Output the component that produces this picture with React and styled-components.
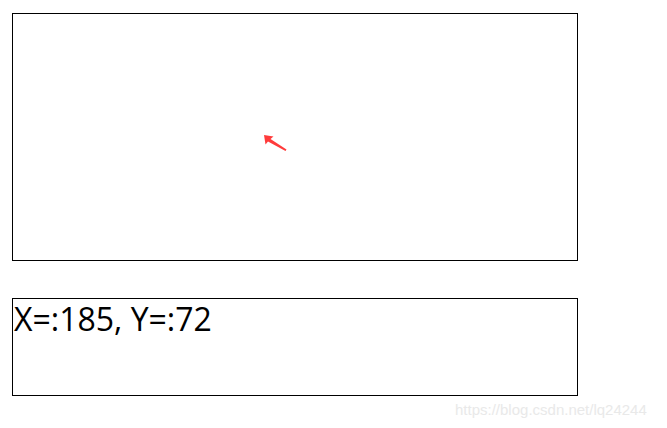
import React from 'react';
import styled, { createGlobalStyle } from 'styled-components';

const GlobalStyle = createGlobalStyle`
    html, body {
        margin: 0;
        padding: 0;
        background: #ffffff;
    }
`;

const Page = styled.div`
    position: relative;
    width: 667px;
    height: 428px;
    padding: 13px 0 0 12px;
    box-sizing: border-box;
    display: flex;
    flex-direction: column;
    gap: 37px;
    font-family: 'Open Sans', 'Noto Sans', sans-serif;
`;

const Board = styled.div`
    position: relative;
    width: 566px;
    height: 248px;
    border: 1px solid #000;
    box-sizing: border-box;
`;

const Output = styled.div`
    width: 566px;
    height: 98px;
    border: 1px solid #000;
    box-sizing: border-box;
    font-size: 32px;
    line-height: 1;
    padding: 4px 0 0 1px;
    color: #000;
`;

const Watermark = styled.div`
    position: absolute;
    left: 455px;
    top: 401px;
    font-family: 'Liberation Sans', Arial, sans-serif;
    font-size: 15px;
    color: #e9e9e9;
`;

// drawn in board coordinates (page coords minus 12,13)
const Pointer = () => (
    <svg
        width="566"
        height="248"
        style={{ position: 'absolute', left: -1, top: -1 }}
    >
        <polygon
            points="252,122 261.5,123.5 258.5,126 274.5,136.5 273.5,138 256,128.5 253.5,131.5"
            fill="#ff3b3b"
        />
    </svg>
);

export default function App() {
    return (
        <>
            <GlobalStyle />
            <Page>
                <Board>
                    <Pointer />
                </Board>
                <Output>X=:185, Y=:72</Output>
                <Watermark>https://blog.csdn.net/lq24244</Watermark>
            </Page>
        </>
    );
}
